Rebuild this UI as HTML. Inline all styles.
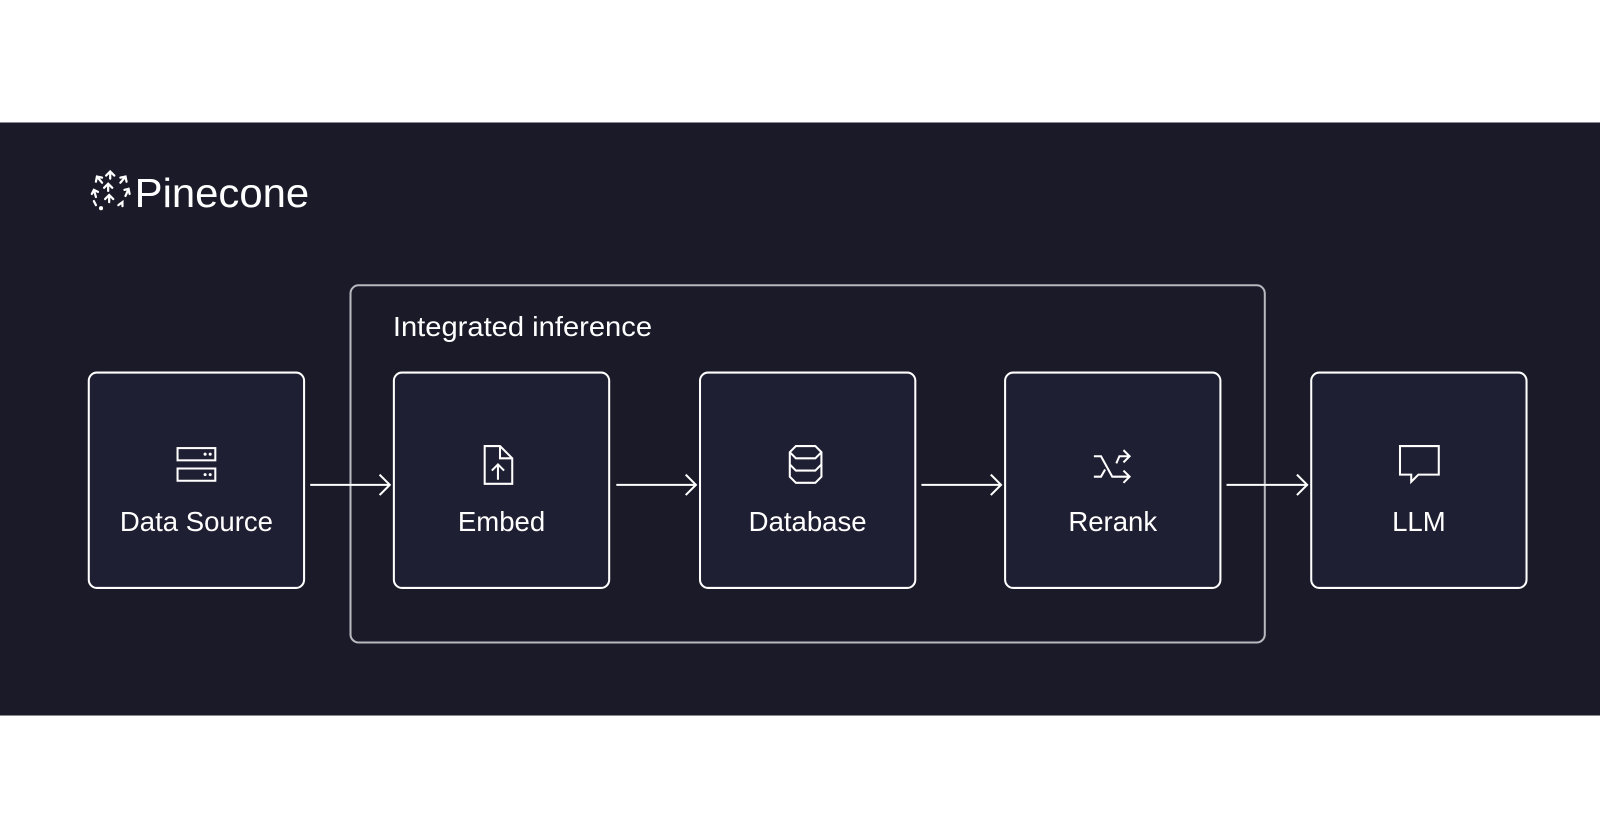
<!DOCTYPE html>
<html><head><meta charset="utf-8"><style>
html,body{margin:0;padding:0;background:#fff;width:1600px;height:838px;overflow:hidden}
svg{display:block}
text{font-family:"Liberation Sans",sans-serif;fill:#fff}
</style></head><body>
<svg width="1600" height="838" viewBox="0 0 1568 821" preserveAspectRatio="none">
<rect x="0" y="120" width="1568" height="581" fill="#1b1a28"/>
<!-- logo -->
<g stroke="#fff" stroke-width="2.2" fill="none" stroke-linecap="round">
<path d="M104 172 l4 -4 l4 4 M108 168 v7"/>
<path d="M94 178 l1 -5 l5 1 M95 173 l5 6"/>
<path d="M118 174 l5 -1 l1 5 M123 173 l-5 6"/>
<path d="M102 184 l4 -4 l4 4 M106 180 v7"/>
<path d="M90 190 l2 -4 l4 2 M92 186 l2 7"/>
<path d="M122 186 l4 -1 l1 5 M126 185 l-3 7"/>
<path d="M103 195 l4 -4 l4 4 M107 191 v7"/>
<path d="M94 201 l-2 -4 M116 201 l4 -3 l0 4"/>
</g>
<circle cx="99" cy="204" r="2" fill="#fff"/>
<text x="132" y="203" font-size="40" textLength="171" lengthAdjust="spacingAndGlyphs">Pinecone</text>
<!-- outer group -->
<rect x="343.5" y="279.5" width="896" height="350" rx="8" fill="none" stroke="#b8b8bf" stroke-width="2"/>
<text x="385" y="329" font-size="27" textLength="254" lengthAdjust="spacingAndGlyphs">Integrated inference</text>
<!-- boxes -->
<g fill="#1f1f33" stroke="#fff" stroke-width="2">
<rect x="87" y="365" width="211" height="211" rx="8"/>
<rect x="386" y="365" width="211" height="211" rx="8"/>
<rect x="686" y="365" width="211" height="211" rx="8"/>
<rect x="985" y="365" width="211" height="211" rx="8"/>
<rect x="1285" y="365" width="211" height="211" rx="8"/>
</g>
<g font-size="27" text-anchor="middle">
<text x="192.5" y="520">Data Source</text>
<text x="491.5" y="520">Embed</text>
<text x="791.5" y="520">Database</text>
<text x="1090.5" y="520">Rerank</text>
<text x="1390.5" y="520">LLM</text>
</g>
<!-- arrows -->
<g stroke="#fff" stroke-width="2" fill="none">
<path d="M304 475 H381 M372 465 l10 10 l-10 10"/>
<path d="M604 475 H681 M672 465 l10 10 l-10 10"/>
<path d="M903 475 H980 M971 465 l10 10 l-10 10"/>
<path d="M1202 475 H1280 M1271 465 l10 10 l-10 10"/>
</g>
<!-- icons -->
<g stroke="#fff" stroke-width="2" fill="none">
<rect x="174" y="439" width="37" height="12"/>
<rect x="174" y="459" width="37" height="12"/>
<path d="M475 437 h15 l12 12 v25 h-27 z M490 437 v12 h12"/>
<path d="M488 470 v-14 M482 461 l6 -6 l6 6"/>
<path d="M774 443 l6 -6 h19 l6 6 v24 l-6 6 h-19 l-6 -6 z"/>
<path d="M774 443 l6 6 h19 l6 -6"/>
<path d="M774 455 l6 6 h19 l6 -6"/>
<path d="M1072 447 h7 l11 20 h17 M1072 467 h7 l4 -7 M1094 454 l3 -7 h10 M1101 441 l6 6 l-6 6 M1101 461 l6 6 l-6 6"/>
<path d="M1372 437 h38 v28 h-20 l-7 7 v-7 h-11 z"/>
</g>
<g fill="#fff">
<circle cx="201" cy="445" r="1.5"/><circle cx="206" cy="445" r="1.5"/>
<circle cx="201" cy="465" r="1.5"/><circle cx="206" cy="465" r="1.5"/>
</g>
</svg>
</body></html>
